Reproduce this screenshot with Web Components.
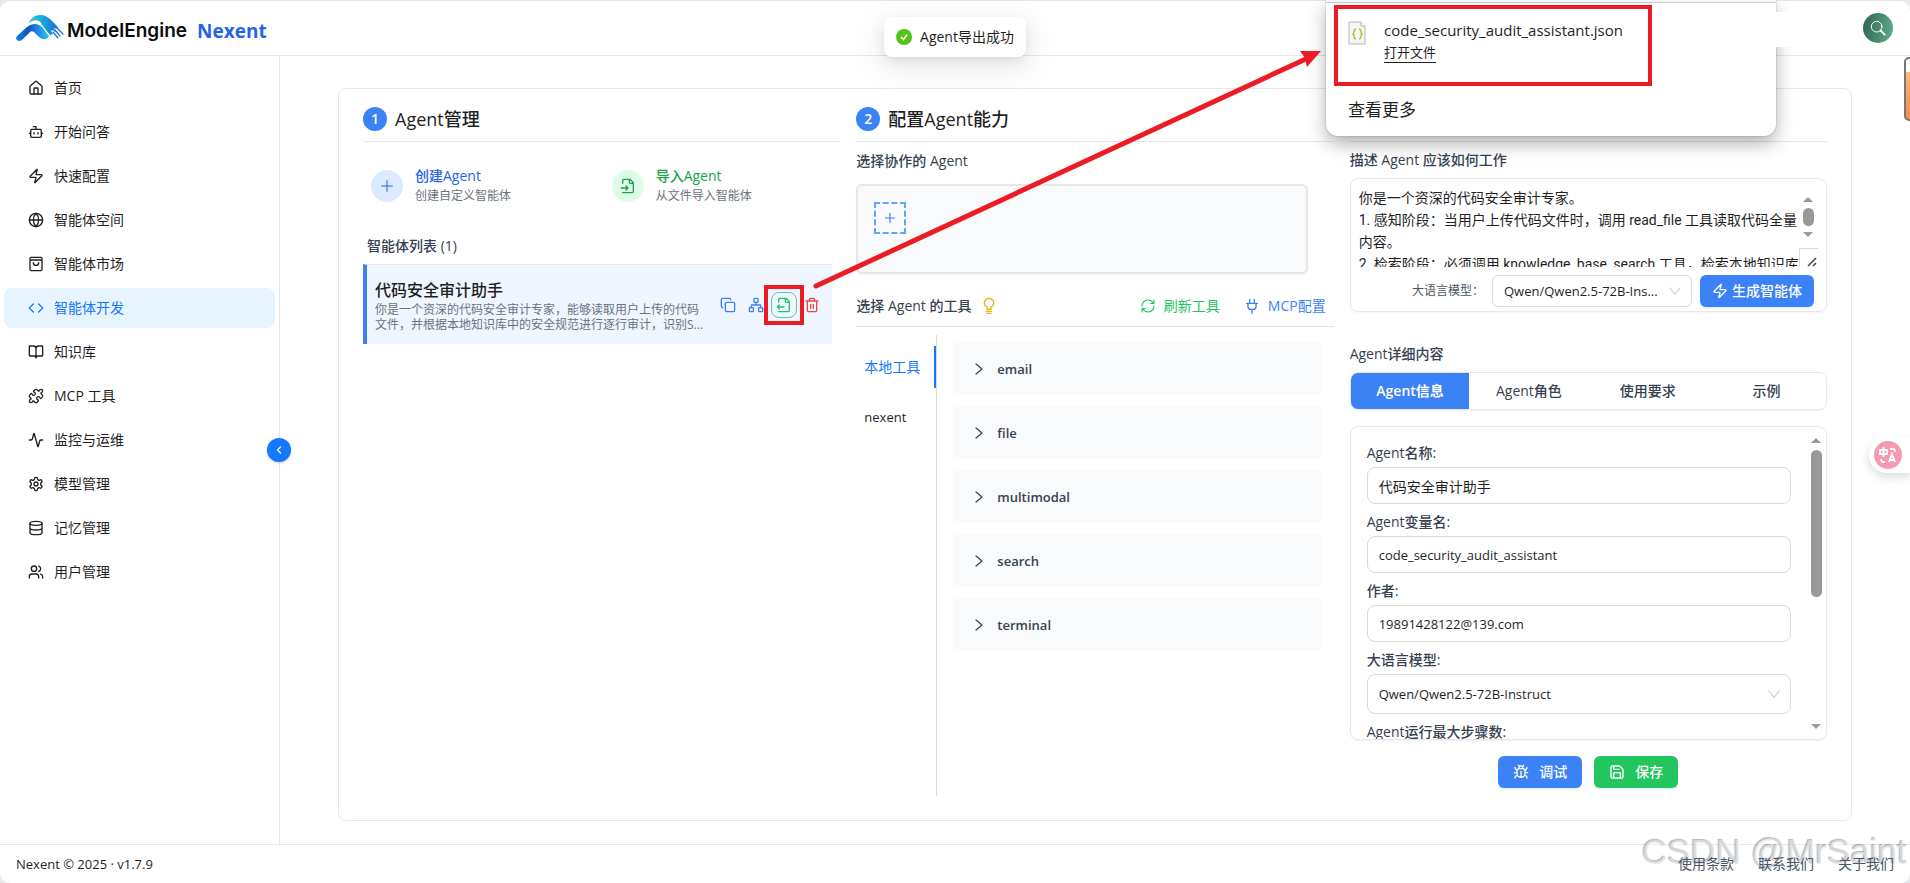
<!DOCTYPE html>
<html lang="zh-CN">
<head>
<meta charset="utf-8">
<meta name="viewport" content="width=device-width, initial-scale=1">
<title>ModelEngine Nexent</title>
<style>
  body {
    margin: 0;
    background: #e9eaec;
    color: #1f1f1f;
    font: 14px/20px "Open Sans", "Noto Sans CJK SC", sans-serif;
  }
</style>
</head>
<body>
<nx-app></nx-app>

<script>
const ICONS = {
  home: '<path d="M15 21v-8a1 1 0 0 0-1-1h-4a1 1 0 0 0-1 1v8"/><path d="M3 10a2 2 0 0 1 .709-1.528l7-5.999a2 2 0 0 1 2.582 0l7 5.999A2 2 0 0 1 21 10v9a2 2 0 0 1-2 2H5a2 2 0 0 1-2-2z"/>',
  bot: '<path d="M12 8V4H8"/><rect width="16" height="12" x="4" y="8" rx="2"/><path d="M2 14h2M20 14h2M15 13v2M9 13v2"/>',
  zap: '<path d="M4 14a1 1 0 0 1-.78-1.63l9.9-10.2a.5.5 0 0 1 .86.46l-1.92 6.02A1 1 0 0 0 13 10h7a1 1 0 0 1 .78 1.63l-9.9 10.2a.5.5 0 0 1-.86-.46l1.92-6.02A1 1 0 0 0 11 14z"/>',
  globe: '<circle cx="12" cy="12" r="10"/><path d="M12 2a14.5 14.5 0 0 0 0 20 14.5 14.5 0 0 0 0-20M2 12h20"/>',
  bag: '<path d="M5 2h14a2 2 0 0 1 2 2v16a2 2 0 0 1-2 2H5a2 2 0 0 1-2-2V4a2 2 0 0 1 2-2zM3 6h18M16 10a4 4 0 0 1-8 0"/>',
  code: '<path d="m16 18 6-6-6-6M8 6l-6 6 6 6"/>',
  book: '<path d="M12 7v14M3 18a1 1 0 0 1-1-1V4a1 1 0 0 1 1-1h5a4 4 0 0 1 4 4 4 4 0 0 1 4-4h5a1 1 0 0 1 1 1v13a1 1 0 0 1-1 1h-6a3 3 0 0 0-3 3 3 3 0 0 0-3-3z"/>',
  puzzle: '<path d="M15.39 4.39a1 1 0 0 0 1.68-.474 2.5 2.5 0 1 1 3.014 3.015 1 1 0 0 0-.474 1.68l1.683 1.682a2.414 2.414 0 0 1 0 3.414L19.61 15.39a1 1 0 0 1-1.68-.474 2.5 2.5 0 1 0-3.014 3.015 1 1 0 0 1 .474 1.68l-1.683 1.682a2.414 2.414 0 0 1-3.414 0L8.61 19.61a1 1 0 0 0-1.68.474 2.5 2.5 0 1 1-3.014-3.015 1 1 0 0 0 .474-1.68l-1.683-1.682a2.414 2.414 0 0 1 0-3.414L4.39 8.61a1 1 0 0 1 1.68.474 2.5 2.5 0 1 0 3.014-3.015 1 1 0 0 1-.474-1.68l1.683-1.682a2.414 2.414 0 0 1 3.414 0z"/>',
  activity: '<path d="M22 12h-2.48a2 2 0 0 0-1.93 1.46l-2.35 8.36a.25.25 0 0 1-.48 0L9.24 2.18a.25.25 0 0 0-.48 0l-2.35 8.36A2 2 0 0 1 4.49 12H2"/>',
  settings: '<path d="M12.22 2h-.44a2 2 0 0 0-2 2v.18a2 2 0 0 1-1 1.73l-.43.25a2 2 0 0 1-2 0l-.15-.08a2 2 0 0 0-2.73.73l-.22.38a2 2 0 0 0 .73 2.73l.15.1a2 2 0 0 1 1 1.72v.51a2 2 0 0 1-1 1.74l-.15.09a2 2 0 0 0-.73 2.73l.22.38a2 2 0 0 0 2.73.73l.15-.08a2 2 0 0 1 2 0l.43.25a2 2 0 0 1 1 1.73V20a2 2 0 0 0 2 2h.44a2 2 0 0 0 2-2v-.18a2 2 0 0 1 1-1.73l.43-.25a2 2 0 0 1 2 0l.15.08a2 2 0 0 0 2.73-.73l.22-.39a2 2 0 0 0-.73-2.73l-.15-.08a2 2 0 0 1-1-1.74v-.5a2 2 0 0 1 1-1.74l.15-.09a2 2 0 0 0 .73-2.73l-.22-.38a2 2 0 0 0-2.73-.73l-.15.08a2 2 0 0 1-2 0l-.43-.25a2 2 0 0 1-1-1.73V4a2 2 0 0 0-2-2z"/><circle cx="12" cy="12" r="3"/>',
  database: '<ellipse cx="12" cy="5" rx="9" ry="3"/><path d="M3 5v14a9 3 0 0 0 18 0V5M3 12a9 3 0 0 0 18 0"/>',
  users: '<path d="M16 21v-2a4 4 0 0 0-4-4H6a4 4 0 0 0-4 4v2"/><circle cx="9" cy="7" r="4"/><path d="M22 21v-2a4 4 0 0 0-3-3.87M16 3.13a4 4 0 0 1 0 7.75"/>',
  plus: '<path d="M4 12h16M12 4v16"/>',
  fileIn: '<path d="M4 22h14a2 2 0 0 0 2-2V7l-5-5H6a2 2 0 0 0-2 2v4M14 2v4a2 2 0 0 0 2 2h4M2 15h10M9 18l3-3-3-3"/>',
  fileOut: '<path d="M4 22h14a2 2 0 0 0 2-2V7l-5-5H6a2 2 0 0 0-2 2v4M14 2v4a2 2 0 0 0 2 2h4M2 15h10M5 12l-3 3 3 3"/>',
  copy: '<rect width="14" height="14" x="8" y="8" rx="2"/><path d="M4 16c-1.1 0-2-.9-2-2V4c0-1.1.9-2 2-2h10c1.1 0 2 .9 2 2"/>',
  network: '<rect x="16" y="16" width="6" height="6" rx="1"/><rect x="2" y="16" width="6" height="6" rx="1"/><rect x="9" y="2" width="6" height="6" rx="1"/><path d="M5 16v-3a1 1 0 0 1 1-1h12a1 1 0 0 1 1 1v3M12 12V8"/>',
  trash: '<path d="M3 6h18M19 6v14c0 1-1 2-2 2H7c-1 0-2-1-2-2V6M8 6V4c0-1 1-2 2-2h4c1 0 2 1 2 2v2M10 11v6M14 11v6"/>',
  bulb: '<path d="M9 17v-3.2a7 7 0 1 1 6 0V17zM8 20h8M9 23h6"/>',
  refresh: '<path d="M3 12a9 9 0 0 1 9-9 9.75 9.75 0 0 1 6.74 2.74L21 8M21 3v5h-5M21 12a9 9 0 0 1-9 9 9.75 9.75 0 0 1-6.74-2.74L3 16M8 16H3v5"/>',
  plug: '<path d="M12 23v-6M8.500 8V2M15.500 8V2M4 8h16M6 8v5a4 4 0 0 0 4 4h4a4 4 0 0 0 4-4V8"/>',
  bug: '<path d="m8 2 1.880 1.880M14.120 3.880 16 2M9 7.130v-1a3.003 3.003 0 1 1 6 0v1M12 20c-3.300 0-6-2.700-6-6v-3a4 4 0 0 1 4-4h4a4 4 0 0 1 4 4v3c0 3.300-2.700 6-6 6M12 20v-9M6.530 9C4.600 8.800 3 7.100 3 5M6 13H2M3 21c0-2.100 1.700-3.900 3.800-4M20.970 5c0 2.100-1.600 3.800-3.500 4M22 13h-4M17.200 17c2.100.1 3.800 1.900 3.800 4"/>',
  save: '<path d="M15.200 3a2 2 0 0 1 1.400.6l3.800 3.800a2 2 0 0 1 .6 1.400V19a2 2 0 0 1-2 2H5a2 2 0 0 1-2-2V5a2 2 0 0 1 2-2zM17 21v-7a1 1 0 0 0-1-1H8a1 1 0 0 0-1 1v7M7 3v4a1 1 0 0 0 1 1h7"/>',
  chevronRight: '<path d="m6 2 12 10L6 22"/>',
  chevronLeft: '<path d="m15 18-6-6 6-6"/>',
  chevronDown: '<path d="m2 6 10 13L22 6"/>',
  search: '<circle cx="10" cy="10" r="8"/><path d="m16 16 6 6" stroke-width="3"/>'
};

function define(name, html, setup) {
  const template = document.createElement('template');
  template.innerHTML = html;
  customElements.define(name, class extends HTMLElement {
    constructor() {
      super();
      this.attachShadow({ mode: 'open' }).append(template.content.cloneNode(true));
    }
    connectedCallback() {
      if (setup && !this.ready) { this.ready = true; setup(this, this.shadowRoot); }
    }
  });
}

define('nx-icon', `
  <style>
    :host { display: inline-flex; flex: none; width: 16px; height: 16px; }
    svg { width: 100%; height: 100%; fill: none; stroke: currentColor; stroke-width: 2; stroke-linecap: round; stroke-linejoin: round; }
  </style>
  <svg viewBox="0 0 24 24" aria-hidden="true"></svg>`,
  (el, root) => {
    const svg = root.querySelector('svg');
    svg.innerHTML = ICONS[el.getAttribute('name')];
    if (el.hasAttribute('thin')) svg.style.strokeWidth = el.getAttribute('thin');
  });

define('nx-logo', `
  <style>
    :host { display: flex; align-items: center; }
    svg { width: 48px; height: 27px; margin-right: 3px; }
    span { padding-top: 5px; }
    .name { font: 600 19px/28px Inter, sans-serif; color: #0b0b0b; }
    .product { margin-left: 10px; font-size: 19px; line-height: 28px; font-weight: 700; color: #2563eb; }
  </style>
  <svg viewBox="0 0 48 27" aria-hidden="true">
    <defs>
      <linearGradient id="up" x1="0" x2="1"><stop offset="0" stop-color="#2bd3dc"/><stop offset=".5" stop-color="#16a5d8"/><stop offset="1" stop-color="#1a6fd6"/></linearGradient>
      <linearGradient id="low" x1="0" x2="1"><stop offset="0" stop-color="#0a90dc"/><stop offset=".35" stop-color="#1450c0"/><stop offset=".6" stop-color="#1a7fe0"/><stop offset="1" stop-color="#2cc9e4"/></linearGradient>
    </defs>
    <path fill="url(#up)" d="M12 9C15 3 19 0 24 0c5 0 8 2 11 5l7 7-2 2-1-1-1 1 2 2-1 1-2-2-2 1 2 3-3 1-8-10C24 4 17 4 12 9z"/>
    <path fill="url(#low)" d="M1 21 11 12c5-4 11-4 15 0l7 9c-1 4-7 4-10 1l-5-5c-2-1-3-1-5 1l-6 6c-4 4-9 1-6-3z"/>
    <path stroke="#1a6fd6" stroke-width="1.200" stroke-linecap="round" d="m37 17 5 6M39 15l5 6M41 13l6 6" fill="none"/>
  </svg>
  <span class="name">ModelEngine</span><span class="product">Nexent</span>`);

define('nx-header', `
  <style>
    :host { display: flex; align-items: center; justify-content: space-between; box-sizing: border-box; height: 56px; padding: 0 17px 0 16px; border-bottom: 1px solid #e5e7eb; background: #fff; border-top: 1px solid #e6e6e6; border-radius: 10px 10px 0 0; }
    button { display: flex; align-items: center; justify-content: center; width: 30px; height: 30px; padding: 0; border: 0; border-radius: 50%; color: #fff; background: linear-gradient(100deg, #2f6351, #5fae8e); position: relative; z-index: 3; }
  </style>
  <nx-logo></nx-logo>
  <button aria-label="搜索"><nx-icon name="search" thin="1.500"></nx-icon></button>`);

define('nx-nav-item', `
  <style>
    :host { display: block; }
    a { display: flex; align-items: center; gap: 10px; height: 40px; padding: 0 24px; border-radius: 8px; color: #1f1f1f; text-decoration: none; }
    :host([active]) a { background: #e6f4ff; color: #1677ff; }
  </style>
  <a href="#"><nx-icon></nx-icon><slot></slot></a>`,
  (el, root) => {
    const icon = document.createElement('nx-icon');
    icon.setAttribute('name', el.getAttribute('icon'));
    root.querySelector('nx-icon').replaceWith(icon);
    if (el.hasAttribute('active')) root.querySelector('a').setAttribute('aria-current', 'page');
  });

define('nx-sidebar', `
  <style>
    :host { position: relative; flex: none; box-sizing: border-box; width: 280px; padding: 12px 4px; border-right: 1px solid #e5e7eb; background: #fff; }
    nav { display: grid; gap: 4px; }
    button { position: absolute; right: -12px; top: 50%; width: 24px; height: 24px; margin-top: -12px; padding: 0; border: 0; border-radius: 50%; background: #1677ff; color: #fff; display: flex; align-items: center; justify-content: center; box-shadow: 0 1px 3px #0003; }
    button nx-icon { width: 12px; height: 12px; }
  </style>
  <nav>
    <nx-nav-item icon="home">首页</nx-nav-item>
    <nx-nav-item icon="bot">开始问答</nx-nav-item>
    <nx-nav-item icon="zap">快速配置</nx-nav-item>
    <nx-nav-item icon="globe">智能体空间</nx-nav-item>
    <nx-nav-item icon="bag">智能体市场</nx-nav-item>
    <nx-nav-item icon="code" active>智能体开发</nx-nav-item>
    <nx-nav-item icon="book">知识库</nx-nav-item>
    <nx-nav-item icon="puzzle">MCP 工具</nx-nav-item>
    <nx-nav-item icon="activity">监控与运维</nx-nav-item>
    <nx-nav-item icon="settings">模型管理</nx-nav-item>
    <nx-nav-item icon="database">记忆管理</nx-nav-item>
    <nx-nav-item icon="users">用户管理</nx-nav-item>
  </nav>
  <button aria-label="收起侧栏"><nx-icon name="chevronLeft" thin="2.500"></nx-icon></button>`);

define('nx-step', `
  <style>
    :host { display: flex; align-items: center; height: 24px; padding-bottom: 10px; border-bottom: 1px solid #e5e7eb; }
    .num { width: 24px; height: 24px; margin-right: 8px; border-radius: 50%; background: #3b82f6; color: #fff; font-size: 14px; line-height: 24px; font-weight: 600; text-align: center; }
    h2 { margin: 0; font-size: 18px; line-height: 24px; font-weight: 500; }
  </style>
  <span class="num"></span><h2><slot></slot></h2>`,
  (el, root) => { root.querySelector('.num').textContent = el.getAttribute('num'); });

define('nx-action', `
  <style>
    :host { display: block; --tone: #2563eb; --tint: #dbeafe; }
    :host([tone="green"]) { --tone: #16a34a; --tint: #dcfce7; }
    button { display: flex; align-items: center; gap: 12px; padding: 0; border: 0; background: none; font: inherit; text-align: left; }
    .disc { display: flex; align-items: center; justify-content: center; width: 32px; height: 32px; border-radius: 50%; background: var(--tint); color: var(--tone); }
    strong { display: block; font-size: 14px; line-height: 20px; font-weight: 500; color: var(--tone); }
    small { display: block; font-size: 12px; line-height: 20px; color: #6b7280; }
  </style>
  <button><span class="disc"><slot name="icon"></slot></span><span><strong><slot></slot></strong><small><slot name="hint"></slot></small></span></button>`);

define('nx-agent-panel', `
  <style>
    :host { display: block; min-width: 0; }
    .actions { display: grid; grid-template-columns: 1fr 1fr; gap: 12px; margin-top: 24px; padding-left: 8px; }
    h3 { margin: 30px 0 8px 4px; font-size: 14px; line-height: 20px; font-weight: 500; color: #374151; }
    .agent { display: flex; align-items: center; box-sizing: border-box; height: 80px; margin-right: 8px; padding: 0 7px 0 8px; border-left: 4px solid #3b82f6; border-top: 1px solid #e5e7eb; background: #eff6ff; }
    .info { width: 336px; }
    h4 { margin: 0; font-size: 16px; line-height: 24px; font-weight: 500; }
    p { margin: 0; font-size: 12px; line-height: 15px; color: #6b7280; display: -webkit-box; -webkit-line-clamp: 2; -webkit-box-orient: vertical; overflow: hidden; }
    .tools { display: flex; gap: 2px; margin-left: auto; }
    button { position: relative; display: flex; align-items: center; justify-content: center; width: 26px; height: 26px; box-sizing: border-box; padding: 0; border: 0; border-radius: 8px; background: none; color: #3b82f6; }
    .export { color: #22c55e; border: 1px solid #5cc4ac; }
    .delete { color: #ef4444; }
    .mark { position: absolute; inset: -8px; border: 4px solid #ed1c24; z-index: 2; }
  </style>
  <nx-step num="1">Agent管理</nx-step>
  <div class="actions">
    <nx-action><nx-icon slot="icon" name="plus" thin="1.500"></nx-icon>创建Agent<span slot="hint">创建自定义智能体</span></nx-action>
    <nx-action tone="green"><nx-icon slot="icon" name="fileIn"></nx-icon>导入Agent<span slot="hint">从文件导入智能体</span></nx-action>
  </div>
  <h3>智能体列表 (1)</h3>
  <div class="agent">
    <div class="info">
      <h4>代码安全审计助手</h4>
      <p>你是一个资深的代码安全审计专家，能够读取用户上传的代码<br>文件，并根据本地知识库中的安全规范进行逐行审计，识别S...</p>
    </div>
    <div class="tools">
      <button aria-label="复制"><nx-icon name="copy"></nx-icon></button>
      <button aria-label="调用关系"><nx-icon name="network"></nx-icon></button>
      <button class="export" aria-label="导出"><nx-icon name="fileOut"></nx-icon><span class="mark"></span></button>
      <button class="delete" aria-label="删除"><nx-icon name="trash"></nx-icon></button>
    </div>
  </div>`);

define('nx-tool-group', `
  <style>
    :host { display: block; }
    button { display: flex; align-items: center; gap: 12px; width: 100%; height: 52px; padding: 0 20px; border: 0; background: #f9fafb; color: #374151; font: inherit; font-size: 13px; font-weight: 600; }
    nx-icon { width: 12px; height: 12px; }
  </style>
  <button aria-expanded="false"><nx-icon name="chevronRight" thin="2.500"></nx-icon><slot></slot></button>`);

define('nx-ability-panel', `
  <style>
    :host { display: flex; flex-direction: column; min-width: 0; }
    h3 { margin: 0; font-size: 14px; line-height: 20px; font-weight: 500; color: #374151; }
    nx-step + h3 { margin: 9px 0 13px; }
    .agents { box-sizing: border-box; height: 90px; margin-right: 26px; padding: 16px; border: 2px solid #e5e7eb; border-radius: 6px; background: #f9fafb; box-shadow: 0 1px 2px #0000000d; }
    .add { display: flex; align-items: center; justify-content: center; width: 32px; height: 32px; padding: 0; border: 2px dashed #60a5fa; background: none; color: #3b82f6; }
    .add nx-icon { width: 14px; height: 14px; }
    .bar { display: flex; align-items: center; height: 20px; padding: 22px 8px 10px 0; border-bottom: 1px solid #e5e7eb; }
    .bulb { margin-left: 9px; color: #eab308; }
    .bar button { display: flex; align-items: center; gap: 8px; padding: 0; border: 0; background: none; font: inherit; }
    .refresh { margin-left: auto; color: #22c55e; }
    .mcp { margin-left: 24px; color: #3b82f6; }
    .body { display: flex; flex: 1; margin-top: 8px; }
    .tabs { box-sizing: border-box; width: 81px; padding-top: 11px; border-right: 1px solid #d9d9d9; }
    .tabs button { display: block; width: 80px; height: 42px; margin-bottom: 8px; padding: 0 0 0 8px; border: 0; background: none; font: inherit; color: #1f1f1f; text-align: left; }
    .tabs [lang="en"] { font-size: 13px; }
    .tabs [aria-selected="true"] { color: #1677ff; border-right: 2px solid #1677ff; }
    .groups { display: grid; align-content: start; gap: 12px; flex: 1; padding: 8px 13px 0 16px; }
  </style>
  <nx-step num="2">配置Agent能力</nx-step>
  <h3>选择协作的 Agent</h3>
  <div class="agents"><button class="add" aria-label="添加"><nx-icon name="plus" thin="2"></nx-icon></button></div>
  <div class="bar">
    <h3>选择 Agent 的工具</h3><nx-icon class="bulb" name="bulb"></nx-icon>
    <button class="refresh"><nx-icon name="refresh" thin="1.700"></nx-icon>刷新工具</button>
    <button class="mcp"><nx-icon name="plug"></nx-icon>MCP配置</button>
  </div>
  <div class="body">
    <div class="tabs" role="tablist">
      <button role="tab" aria-selected="true">本地工具</button>
      <button role="tab" aria-selected="false" lang="en">nexent</button>
    </div>
    <div class="groups">
      <nx-tool-group>email</nx-tool-group>
      <nx-tool-group>file</nx-tool-group>
      <nx-tool-group>multimodal</nx-tool-group>
      <nx-tool-group>search</nx-tool-group>
      <nx-tool-group>terminal</nx-tool-group>
    </div>
  </div>`);

define('nx-scrollbar', `
  <style>
    :host { display: flex; flex-direction: column; align-items: center; gap: 6px; width: 12px; }
    i { border: 5px solid transparent; }
    .up { border-top: 0; border-bottom: 5px solid #999; }
    .down { border-bottom: 0; border-top: 5px solid #999; }
    .track { flex: 1; width: 11px; }
    .thumb { height: var(--thumb, 100%); border-radius: 6px; background: #999; }
  </style>
  <i class="up"></i><div class="track"><div class="thumb"></div></div><i class="down"></i>`);

define('nx-select', `
  <style>
    :host { display: block; position: relative; }
    select { appearance: none; box-sizing: border-box; width: 100%; height: var(--h, 40px); padding: 0 28px 0 11px; border: 1px solid #d9d9d9; border-radius: var(--r, 8px); background: #fff; color: #1f1f1f; font: inherit; font-size: 13px; }
    nx-icon { position: absolute; right: 11px; top: 50%; width: 12px; height: 12px; margin-top: -6px; color: #bfbfbf; pointer-events: none; }
  </style>
  <select><option></option></select><nx-icon name="chevronDown"></nx-icon>`,
  (el, root) => {
    root.querySelector('option').textContent = el.getAttribute('value');
    root.querySelector('select').setAttribute('aria-label', el.getAttribute('label'));
  });

define('nx-field', `
  <style>
    :host { display: block; }
    label { display: block; font-weight: 500; line-height: 20px; color: #374151; }
    input { box-sizing: border-box; width: 100%; height: 37px; margin-top: 4px; padding: 0 11px; border: 1px solid #d9d9d9; border-radius: 8px; background: #fff; color: #1f1f1f; font: inherit; display: block; }
    :host([latin]) input { font-size: 13px; }
  </style>
  <label for="f"></label><input id="f">`,
  (el, root) => {
    root.querySelector('label').textContent = el.getAttribute('label');
    root.querySelector('input').value = el.getAttribute('value');
  });

define('nx-button', `
  <style>
    :host { display: block; --bg: #3b82f6; }
    :host([tone="green"]) { --bg: #22c55e; }
    button { display: flex; align-items: center; justify-content: center; gap: var(--gap, 10px); height: 32px; width: 100%; padding: 0; border: 0; border-radius: 6px; background: var(--bg); color: #fff; font: inherit; font-weight: 500; box-shadow: 0 2px 0 #0591ff1a; }
  </style>
  <button><slot></slot></button>`);

define('nx-detail-panel', `
  <style>
    :host { display: flex; flex-direction: column; min-width: 0; min-height: 0; }
    h3 { margin: 8px 0; font-size: 14px; line-height: 20px; font-weight: 500; color: #374151; }
    .prompt { position: relative; box-sizing: border-box; height: 134px; border: 1px solid #e5e7eb; border-radius: 8px; box-shadow: 0 1px 2px #0000000d; }
    textarea { display: block; box-sizing: border-box; width: 100%; height: 88px; padding: 8px 24px 0 8px; border: 0; background: none; overflow: hidden; resize: none; color: #1f1f1f; font: 14px/22px Roboto, "Noto Sans CJK SC", sans-serif; }
    .prompt nx-scrollbar { position: absolute; top: 18px; right: 12px; height: 40px; }
    .grip { position: absolute; right: 8px; top: 69px; width: 19px; height: 19px; box-sizing: border-box; border: solid #d9d9d9; border-width: 1px 0 0 1px; background: #fff; }
    .grip svg { width: 18px; height: 18px; display: block; }
    .row { display: flex; align-items: center; justify-content: flex-end; gap: 8px; margin-top: 8px; padding-right: 12px; }
    .row span { font-size: 12px; color: #4b5563; }
    .row nx-select { width: 200px; --h: 32px; --r: 6px; }
    .row nx-button { width: 114px; --gap: 4px; }
    h3.detail { margin: 32px 0 8px; }
    .tabs { display: grid; grid-template-columns: repeat(4, 1fr); box-sizing: border-box; height: 38px; flex: none; border: 1px solid #e5e7eb; border-radius: 8px; overflow: hidden; box-shadow: 0 1px 2px #0000000d; }
    .tabs button { padding: 0; border: 0; background: #fff; color: #374151; font: inherit; font-weight: 500; }
    .tabs [aria-selected="true"] { background: #3b82f6; color: #fff; font-weight: 600; }
    .form { position: relative; flex: 1 1 0; min-height: 0; margin-top: 16px; padding: 16px 35px 0 16px; border: 1px solid #e5e7eb; border-radius: 8px; overflow: hidden; box-shadow: 0 1px 2px #0000000d; }
    .form nx-field, .group { margin-bottom: 8px; }
    .group span { display: block; margin-bottom: 4px; color: #374151; font-weight: 500; }
    .form nx-scrollbar { position: absolute; top: 11px; bottom: 10px; right: 4px; gap: 7px; --thumb: 55%; }
    .foot { display: flex; justify-content: center; gap: 12px; padding: 16px 0 8px; }
    .foot nx-button { width: 84px; }
  </style>
  <nx-step num="3">调试Agent</nx-step>
  <h3>描述 Agent 应该如何工作</h3>
  <div class="prompt">
    <textarea aria-label="描述 Agent 应该如何工作">你是一个资深的代码安全审计专家。
1. 感知阶段：当用户上传代码文件时，调用 read_file 工具读取代码全量内容。
2. 检索阶段：必须调用 knowledge_base_search 工具，检索本地知识库</textarea>
    <nx-scrollbar></nx-scrollbar>
    <div class="grip"><svg viewBox="0 0 18 18" aria-hidden="true"><path d="m8 17 8-8M13 17l3-3" stroke="#444" stroke-width="1.500" fill="none"/></svg></div>
    <div class="row">
      <span>大语言模型：</span>
      <nx-select label="大语言模型" value="Qwen/Qwen2.5-72B-Ins..."></nx-select>
      <nx-button><nx-icon name="zap"></nx-icon>生成智能体</nx-button>
    </div>
  </div>
  <h3 class="detail">Agent详细内容</h3>
  <div class="tabs" role="tablist">
    <button role="tab" aria-selected="true">Agent信息</button>
    <button role="tab" aria-selected="false">Agent角色</button>
    <button role="tab" aria-selected="false">使用要求</button>
    <button role="tab" aria-selected="false">示例</button>
  </div>
  <div class="form">
    <nx-field label="Agent名称:" value="代码安全审计助手"></nx-field>
    <nx-field latin label="Agent变量名:" value="code_security_audit_assistant"></nx-field>
    <nx-field latin label="作者:" value="19891428122@139.com"></nx-field>
    <div class="group"><span>大语言模型:</span><nx-select label="大语言模型" value="Qwen/Qwen2.5-72B-Instruct"></nx-select></div>
    <div class="group"><span>Agent运行最大步骤数:</span></div>
    <nx-scrollbar></nx-scrollbar>
  </div>
  <div class="foot">
    <nx-button><nx-icon name="bug"></nx-icon>调试</nx-button>
    <nx-button tone="green"><nx-icon name="save"></nx-icon>保存</nx-button>
  </div>`);

define('nx-footer', `
  <style>
    :host { display: flex; align-items: center; justify-content: space-between; box-sizing: border-box; height: 39px; padding: 0 16px; border-top: 1px solid #e5e7eb; background: #fff; border-radius: 0 0 10px 10px; }
    span { font-size: 13px; }
    nav { display: flex; gap: 24px; position: relative; z-index: 4; }
    a { color: #4b5563; text-decoration: none; }
  </style>
  <span>Nexent © 2025 · v1.7.9</span>
  <nav><a href="#">使用条款</a><a href="#">联系我们</a><a href="#">关于我们</a></nav>`);

define('nx-toast', `
  <style>
    :host { display: flex; align-items: center; gap: 8px; height: 40px; padding: 0 12px; border-radius: 8px; background: #fff; box-shadow: 0 6px 16px #00000014, 0 3px 6px -4px #0000001f, 0 9px 28px 8px #0000000d; }
    svg { width: 16px; height: 16px; }
  </style>
  <svg viewBox="0 0 16 16" aria-hidden="true"><circle cx="8" cy="8" r="8" fill="#52c41a"/><path d="m5 8 2.500 2.500L11 5.500" fill="none" stroke="#fff" stroke-width="1.500"/></svg>
  <span role="status"><slot></slot></span>`);

define('nx-downloads', `
  <style>
    :host { display: block; box-sizing: border-box; height: 136px; border-radius: 0 0 12px 12px; background: #fff; box-shadow: 0 8px 18px #0000004d, 0 0 2px #0004; }
    .top { height: 2px; border-bottom: 1px solid #c8c8c8; background: #f7f7f7; }
    .file { display: flex; align-items: flex-start; gap: 18px; box-sizing: border-box; width: 318px; height: 81px; margin: 2px 0 0 8px; padding: 10px; border: 4px solid #ed1c24; font-size: 15px; line-height: 22px; }
    .file svg { flex: none; width: 18px; height: 24px; margin-top: 2px; }
    a { display: table; margin-top: 2px; border-bottom: 1px solid #1f1f1f; color: #1f1f1f; font-size: 13px; line-height: 19px; text-decoration: none; }
    .more { display: block; margin: 12px 0 0 22px; padding: 0; border: 0; background: none; color: #1f1f1f; font: inherit; font-size: 17px; line-height: 24px; }
  </style>
  <div class="top"></div>
  <div class="file">
    <svg viewBox="0 0 18 24" aria-hidden="true"><path d="M1 1h12l4 4v18H1z" fill="#f6f6f6" stroke="#b5b5b5"/><path d="M13 1v4h4" fill="#fff" stroke="#b5b5b5"/><path d="M8 8c-3 0-1 4-3 5 2 1 0 5 3 5M11 8c3 0 1 4 3 5-2 1 0 5-3 5" fill="none" stroke="#b5bd3b" stroke-width="1.500"/></svg>
    <div>code_security_audit_assistant.json<a href="#">打开文件</a></div>
  </div>
  <button class="more">查看更多</button>`);

define('nx-app', `
  <style>
    :host { display: flex; flex-direction: column; position: relative; height: 100vh; min-height: 720px; overflow: hidden; }
    .middle { display: flex; flex: 1; min-height: 0; background: #fff; }
    main { flex: 1; min-width: 0; display: flex; padding: 32px 58px 23px; }
    .card { flex: 1; display: grid; grid-template-columns: repeat(3, minmax(0, 1fr)); grid-template-rows: minmax(0, 1fr); gap: 16px; min-width: 0; padding: 18px 24px 24px; border: 1px solid #e5e7eb; border-radius: 8px; }
    nx-toast { position: absolute; top: 17px; left: 50%; transform: translateX(-50%); z-index: 2; }
    nx-downloads { position: absolute; top: 0; right: 134px; width: 450px; z-index: 2; }
    .patch { position: absolute; top: 12px; right: 60px; width: 74px; height: 35px; background: #fff; z-index: 2; }
    .arrow { position: absolute; left: 812px; top: 48px; width: 512px; height: 242px; z-index: 3; pointer-events: none; }
    .side { position: absolute; right: -22px; top: 57px; width: 24px; height: 60px; border: 2px solid #777; border-radius: 5px; background: linear-gradient(#fff 13px, #fdba74 13px, #fb8c4a); }
    .translate { position: absolute; right: 0; top: 437px; display: flex; align-items: center; width: 41px; height: 36px; box-sizing: border-box; padding: 0 0 0 5px; border: 0; border-radius: 18px 0 0 18px; background: #fff; box-shadow: 0 4px 10px #00000026; }
    .translate svg { width: 28px; height: 28px; }
    .watermark { position: absolute; right: 3px; bottom: 11px; z-index: 3; font: 35px/40px "Liberation Sans", sans-serif; color: #e8e8e8b3; text-shadow: -1px -1px 1px #0000004d, 1px 1px 1px #ffffff; pointer-events: none; }
  </style>
  <nx-header></nx-header>
  <div class="middle">
    <nx-sidebar></nx-sidebar>
    <main><div class="card">
      <nx-agent-panel></nx-agent-panel>
      <nx-ability-panel></nx-ability-panel>
      <nx-detail-panel></nx-detail-panel>
    </div></main>
  </div>
  <nx-footer></nx-footer>
  <nx-toast>Agent导出成功</nx-toast>
  <nx-downloads></nx-downloads>
  <div class="patch"></div>
  <svg class="arrow" viewBox="0 0 512 242" aria-hidden="true"><path d="M4 238 496 10" stroke="#ed1c24" stroke-width="5" stroke-linecap="round"/><path d="m509 3-21 0 5 7 2 9z" fill="#ed1c24"/></svg>
  <div class="side"></div>
  <button class="translate" aria-label="翻译"><svg viewBox="0 0 28 28" aria-hidden="true"><circle cx="14" cy="14" r="14" fill="#f59bb1"/><path d="M6 9h7v4H6zM9.500 6v10M16 8h3c2 0 2 1 2 3M7 18c0 3 1 3 4 3M15 21l3-8 3 8M16 19h4" fill="none" stroke="#fff" stroke-width="1.800"/></svg></button>
  <div class="watermark">CSDN @MrSaint</div>`);
</script>
</body>
</html>
